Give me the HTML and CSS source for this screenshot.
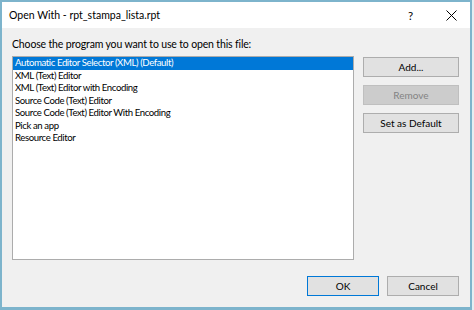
FILE: index.html
```html
<!DOCTYPE html>
<html lang="en">
<head>
  <meta charset="UTF-8"/>
  <title>Open With</title>
  <link rel="stylesheet" href="styles.css">
</head>
<body>
  <div class="window">
    <div class="titlebar">
      <span class="title">Open With - rpt_stampa_lista.rpt</span>
      <span class="help">?</span>
      <svg class="close" width="11" height="11" viewBox="0 0 11 11">
        <path d="M0.5 0.5 L10.5 10.5 M10.5 0.5 L0.5 10.5" stroke="#000" stroke-width="1" fill="none"/>
      </svg>
    </div>
    <div class="body">
      <div class="label">Choose the program you want to use to open this file:</div>
      <div class="main">
        <ul class="list">
          <li class="selected">Automatic Editor Selector (XML) (Default)</li>
          <li>XML (Text) Editor</li>
          <li>XML (Text) Editor with Encoding</li>
          <li>Source Code (Text) Editor</li>
          <li>Source Code (Text) Editor With Encoding</li>
          <li>Pick an app</li>
          <li>Resource Editor</li>
        </ul>
        <div class="side">
          <button>Add...</button>
          <button class="disabled">Remove</button>
          <button>Set as Default</button>
        </div>
      </div>
      <div class="footer">
        <button class="ok">OK</button>
        <button class="cancel">Cancel</button>
      </div>
    </div>
  </div>
</body>
</html>
```

FILE: styles.css
```css
html, body { margin:0; padding:0; }
body { background:#e4eef2; font-family:Lato, "Liberation Sans", Arial, sans-serif; font-size:10.5px; color:#000; }
.window { box-sizing:border-box; width:472px; height:310px; border:2px solid #7db4cc; border-bottom-width:3px; background:#f0f0f0; display:flex; flex-direction:column; }
.titlebar { height:26px; background:#fff; display:flex; align-items:center; padding-left:7px; }
.title { flex:1; font-size:10.5px; }
.help { width:12px; margin-right:26px; font-size:11.5px; }
.close { margin-right:13px; }
.body { flex:1; padding:9px 9px 0 10px; display:flex; flex-direction:column; }
.label { height:14px; line-height:14px; margin-bottom:5px; letter-spacing:-0.15px; }
.main { display:flex; }
.list { list-style:none; margin:0; padding:0; width:340px; height:202px; border:1px solid #acacac; background:#fff; font-size:9.6px; letter-spacing:-0.4px; }
.list li { height:12.5px; line-height:12.5px; padding-left:2px; white-space:nowrap; }
.list li.selected { background:#0078d7; color:#fff; }
.side { display:flex; flex-direction:column; gap:8px; margin-left:9px; padding-top:1px; }
button { box-sizing:border-box; height:20px; border:1px solid #adadad; background:#e1e1e1; font-family:inherit; font-size:10px; color:#000; padding:0; }
.side button { width:96px; }
.side .disabled { background:#cccccc; border-color:#bfbfbf; color:#838383; }
.footer { display:flex; justify-content:flex-end; gap:8px; margin-top:16px; padding-right:2px; }
.footer button { width:72px; }
.footer .ok { border-color:#0078d7; }
```
